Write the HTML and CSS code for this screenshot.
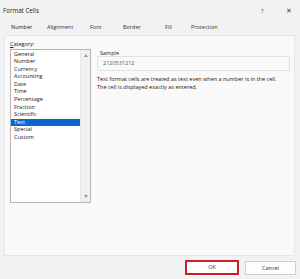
FILE: index.html
```html
<html><head>
<title>Format Cells</title>
<link rel="stylesheet" href="styles.css">
</head>
<body>
<div class="window">
  <div class="titlebar">
    <span class="title">Format Cells</span>
    <span class="help">?</span>
    <span class="close">&#x2715;</span>
  </div>
  <div class="tabs">
    <span class="tab selected">Number</span>
    <span class="tab">Alignment</span>
    <span class="tab">Font</span>
    <span class="tab">Border</span>
    <span class="tab">Fill</span>
    <span class="tab">Protection</span>
  </div>
  <div class="panel">
    <div class="category">
      <div class="label"><u>C</u>ategory:</div>
      <div class="listbox">
        <ul class="items">
          <li>General</li>
          <li>Number</li>
          <li>Currency</li>
          <li>Accounting</li>
          <li>Date</li>
          <li>Time</li>
          <li>Percentage</li>
          <li>Fraction</li>
          <li>Scientific</li>
          <li class="sel">Text</li>
          <li>Special</li>
          <li>Custom</li>
        </ul>
        <div class="scroll">
          <span class="arrow up"></span>
          <span class="arrow down"></span>
        </div>
      </div>
    </div>
    <div class="detail">
      <div class="sample-label">Sample</div>
      <div class="sample">2120531212</div>
      <p class="desc">Text format cells are treated as text even when a number is in the cell.<br>
      The cell is displayed exactly as entered.</p>
    </div>
  </div>
  <div class="footer">
    <span class="btn ok">OK</span>
    <span class="btn">Cancel</span>
  </div>
</div>
</body>
</html>
```

FILE: styles.css
```css
body { margin: 0; font-family: "Open Sans", "Noto Sans", sans-serif; color: #222; }
.window { width: 300px; height: 279px; background: #f2f2f2; font-size: 5.5px; display: flex; flex-direction: column; }

.titlebar { height: 20px; display: flex; align-items: center; padding: 1px 0 0 3px; box-sizing: border-box; }
.title { font-size: 6.2px; flex: 1; }
.help { font-size: 6px; color: #444; width: 25px; }
.close { font-size: 6.5px; color: #444; width: 14px; }

.tabs { height: 15px; display: grid; grid-template-columns: 36px 43px 33px 42px 26px auto; align-items: center; padding-left: 11px; }
.tab { line-height: 15px; color: #333; }
.tab.selected { color: #222; }

.panel { flex: 0 0 219px; margin: 0 5px 0 4px; background: #f9f9f9; border: 1px solid #e6e6e6; display: flex; }

.category { width: 81px; margin-left: 5px; display: flex; flex-direction: column; }
.label { margin-top: 4px; height: 9px; }
.listbox { height: 152px; border: 1px solid #b5b5b5; background: #fff; display: flex; }
.items { list-style: none; margin: 0; padding: 0; flex: 1; }
.items li { height: 7.6px; line-height: 7.6px; padding-left: 3px; }
.items li:first-child { margin-top: 0.5px; }
.items li.sel { background: #0a68cc; color: #fff; }
.scroll { width: 9px; background: #f0f0f0; border-left: 1px solid #e8e8e8; display: flex; flex-direction: column; justify-content: space-between; align-items: center; padding: 4px 0; }
.arrow { width: 0; height: 0; border-left: 2px solid transparent; border-right: 2px solid transparent; }
.arrow.up { border-bottom: 3px solid #999; }
.arrow.down { border-top: 3px solid #999; }

.detail { flex: 1; margin: 0 4px 0 6px; }
.sample-label { margin-top: 13px; padding-left: 3px; height: 7px; }
.sample { height: 13px; line-height: 13px; border: 1px solid #e2e2e2; background: #f9f9f9; padding-left: 5px; color: #555; }
.desc { margin: 3.5px 0 0; line-height: 8px; }

.footer { flex: 1; display: flex; justify-content: flex-end; align-items: center; padding-right: 4px; gap: 6px; }
.btn { width: 49px; height: 12px; line-height: 12px; text-align: center; background: #fdfdfd; border: 1px solid #d0d0d0; color: #333; }
.btn.ok { width: 50px; border: 2px solid #c8202c; height: 11px; line-height: 11px; }
```
